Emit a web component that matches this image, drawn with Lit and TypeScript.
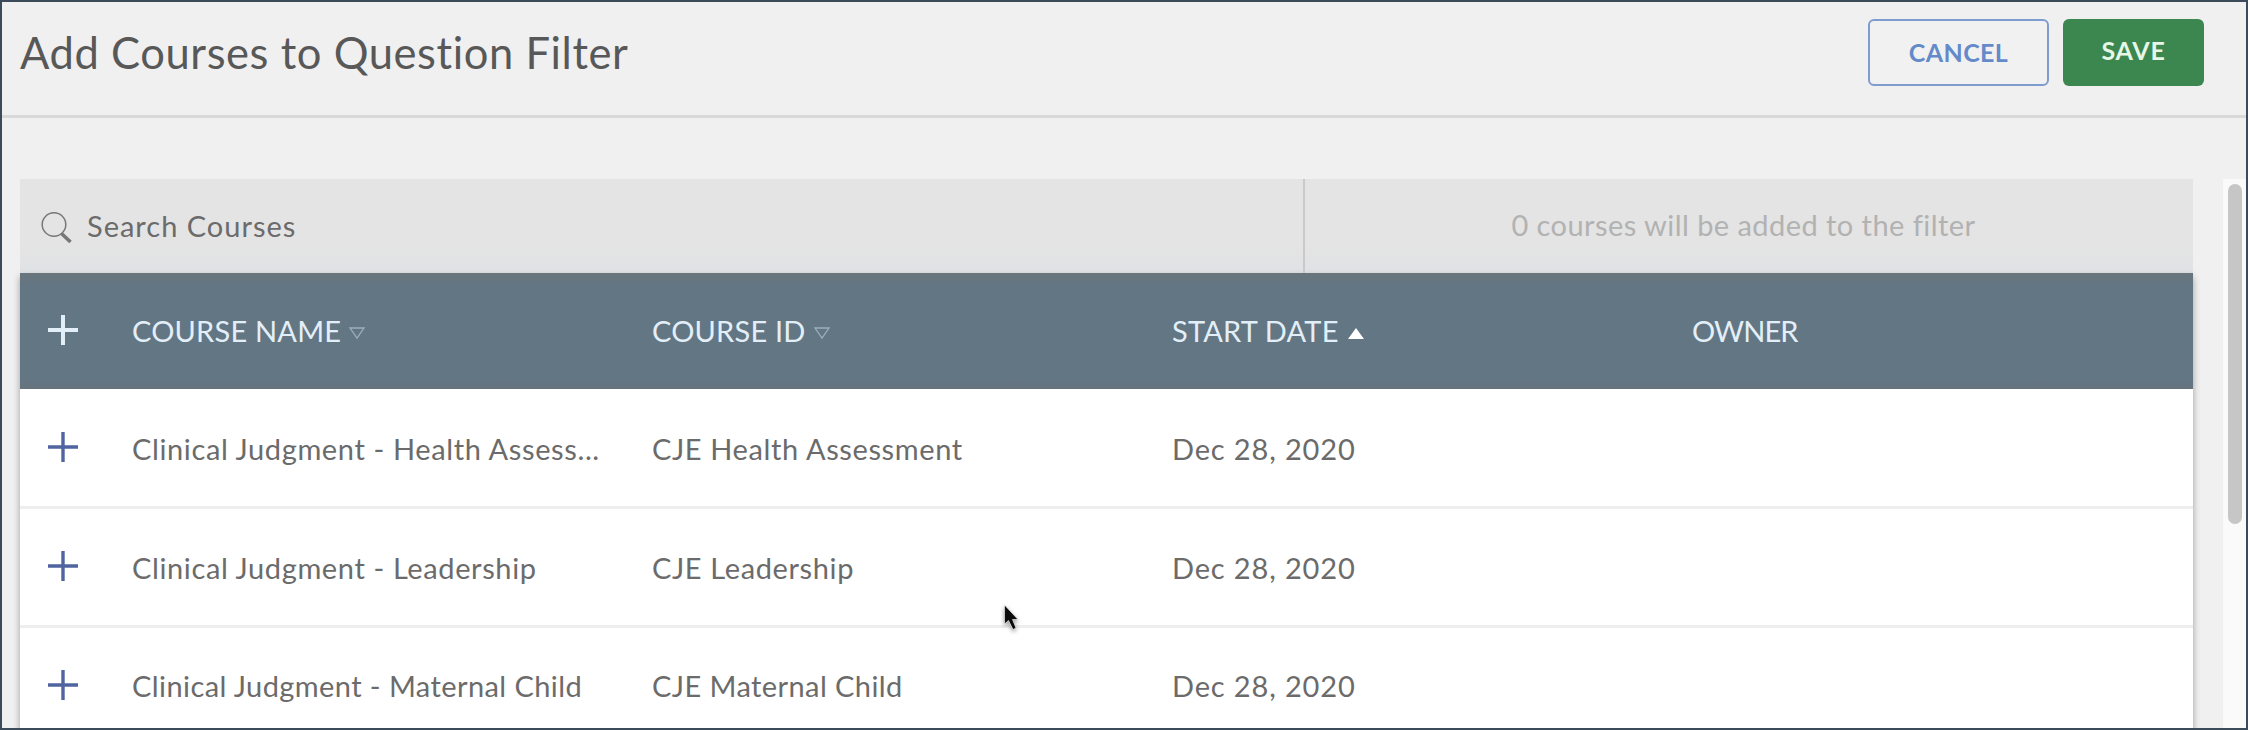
import { LitElement, html, css, svg } from "lit";
import { customElement } from "lit/decorators.js";

interface Course {
  name: string;
  id: string;
  start: string;
}

const courses: Course[] = [
  { name: "Clinical Judgment - Health Assess...", id: "CJE Health Assessment", start: "Dec 28, 2020" },
  { name: "Clinical Judgment - Leadership", id: "CJE Leadership", start: "Dec 28, 2020" },
  { name: "Clinical Judgment - Maternal Child", id: "CJE Maternal Child", start: "Dec 28, 2020" },
];

const plus = svg`<svg class="plus" width="32" height="32" viewBox="0 0 32 32" fill="none" stroke="currentColor"><path d="M16 1V31M1 16H31"/></svg>`;
const sortDown = svg`<svg class="sort idle" width="18" height="14" viewBox="0 0 18 14" fill="none" stroke="currentColor" stroke-width="1.3"><path d="M2 2H16L9 12Z"/></svg>`;
const sortUp = svg`<svg class="sort" width="18" height="14" viewBox="0 0 18 14" fill="currentColor"><path d="M1 13L9 2L17 13Z"/></svg>`;

@customElement("app-root")
export class AppRoot extends LitElement {
  static styles = css`
    :host {
      display: block;
      font-family: Lato, "Liberation Sans", sans-serif;
      font-size: 29px;
      letter-spacing: 0.62px;
      color: #6b6b6b;
      font-variant-ligatures: none;
    }
    * { box-sizing: border-box; }
    .dialog {
      position: relative;
      display: flex;
      flex-direction: column;
      height: 730px;
      overflow: hidden;
      border: 2px solid #3b4b59;
      background: #f0f0f0;
    }
    .top {
      display: flex;
      flex: none;
      justify-content: space-between;
      align-items: flex-start;
      height: 116px;
      padding: 17px 42px 0 18px;
      border-bottom: 3px solid #d9d9d9;
    }
    h1 {
      margin: 0;
      font-size: 43.5px;
      line-height: 66px;
      font-weight: 400;
      letter-spacing: 0.57px;
      color: #585858;
    }
    .actions { display: flex; gap: 14px; }
    button {
      display: flex;
      justify-content: center;
      height: 67px;
      padding: 0;
      border-radius: 6px;
      font: 700 25px/62px Lato, "Liberation Sans", sans-serif;
    }
    .cancel {
      width: 181px;
      border: 2px solid #7f9ccf;
      background: #f2f1f2;
      color: #648ac9;
      letter-spacing: 0.4px;
    }
    .save {
      width: 141px;
      border: 0;
      background: #3b874f;
      color: #e6f6e7;
      line-height: 63px;
      letter-spacing: 0.8px;
    }
    .body {
      display: flex;
      flex: 1;
      justify-content: space-between;
      min-height: 0;
      padding: 61px 0 0 18px;
    }
    .panel { width: 2173px; }
    .bar {
      display: grid;
      grid-template-columns: 1285px 1fr;
      height: 94px;
      background: linear-gradient(#e4e4e4 75%, #dfe2e6);
    }
    .search {
      display: flex;
      align-items: center;
      gap: 13px;
      padding: 0 0 1px 20px;
      border-right: 2px solid #c9c9c9;
      letter-spacing: 1px;
    }
    .search svg { margin-top: 2px; }
    .summary {
      text-align: center;
      line-height: 91px;
      padding-right: 11px;
      color: #b2b2b2;
      letter-spacing: 0.45px;
    }
    .table { background: #fff; box-shadow: 0 4px 7px rgba(0, 0, 0, 0.35); height: 500px; }
    .line {
      display: grid;
      grid-template-columns: 112px repeat(3, 520px) 1fr;
      align-items: center;
      height: 119px;
      border-bottom: 3px solid #eeeeee;
    }
    .head + .line { height: 120px; padding-top: 1px; }
    .line:last-child { padding-bottom: 1px; }
    .head {
      height: 116px;
      padding: 0 0 2px;
      border: 0;
      background: linear-gradient(#69747d, #637684 12%, #637684 92%, #66737c);
      color: #e3eff8;
      letter-spacing: 0.2px;
    }
    .head .cell { display: flex; align-items: center; gap: 8px; }
    .head .owner { letter-spacing: -0.9px; }
    .sort { margin-top: 6px; color: #fff; }
    .idle { color: #9dafbb; margin-left: -1px; }
    .plus { display: block; margin: 0 0 2px 27px; stroke-width: 3.4; }
    .head .plus { margin-bottom: 1px; stroke-width: 4; }
    .line:not(.head) .plus { color: #5065a0; }
    .line:last-child { letter-spacing: 0.42px; }
    .line .date { letter-spacing: 0.85px; }
    .track {
      width: 23px;
      padding: 5px 4px 0 5px;
      background: #fafafa;
    }
    .thumb { width: 14px; height: 340px; border-radius: 7px; background: #c6c6c7; }
    .pointer { position: absolute; left: 999px; top: 600px; filter: drop-shadow(0 2px 2px rgba(0, 0, 0, 0.4)); }
  `;

  render() {
    return html`
      <div class="dialog">
        <header class="top">
          <h1>Add Courses to Question Filter</h1>
          <div class="actions">
            <button class="cancel">CANCEL</button>
            <button class="save">SAVE</button>
          </div>
        </header>
        <div class="body">
          <div class="panel">
            <div class="bar">
              <div class="search">
                <svg width="34" height="34" viewBox="0 0 34 34" fill="none" stroke="#777">
                  <circle cx="14" cy="14.5" r="11.8" stroke-width="1.5" />
                  <path d="M21.5 23.5L30.5 32" stroke-width="3.6" />
                </svg>
                <span>Search Courses</span>
              </div>
              <div class="summary">0 courses will be added to the filter</div>
            </div>
            <div class="table">
              <div class="line head">
                ${plus}
                <div class="cell">COURSE NAME ${sortDown}</div>
                <div class="cell">COURSE ID ${sortDown}</div>
                <div class="cell">START DATE ${sortUp}</div>
                <div class="cell owner">OWNER</div>
              </div>
              ${courses.map(
                (c) => html`<div class="line">
                  ${plus}
                  <div>${c.name}</div>
                  <div>${c.id}</div>
                  <div class="date">${c.start}</div>
                </div>`,
              )}
            </div>
          </div>
          <div class="track"><div class="thumb"></div></div>
        </div>
        <svg class="pointer" width="20" height="30" viewBox="0 0 20 30">
          <path d="M3.5 3V22L7.5 18.5L12 27.5L15 26L11.5 17.5H17Z" fill="#0b0b0b" stroke="#fff" stroke-width="0.6" />
        </svg>
      </div>
    `;
  }
}
